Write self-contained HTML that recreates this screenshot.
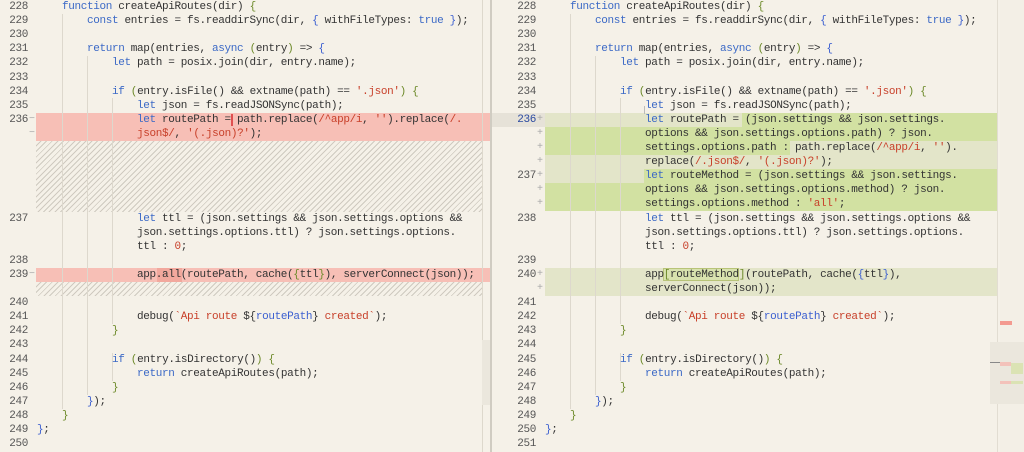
<!DOCTYPE html><html><head><meta charset="utf-8"><style>
body{margin:0;width:1024px;height:452px;background:#f5f1e8;overflow:hidden;position:relative;font-family:"Liberation Mono",monospace;font-size:11px;letter-spacing:-0.35px;color:#333}
.r{position:absolute;height:14.1px;line-height:14.1px;white-space:pre}
.n{position:absolute;width:28px;text-align:right;height:14.1px;line-height:14.1px;color:#555}
.k{color:#3b69c6}.s{color:#c8402a}.b{color:#6d8a2a}.c{color:#3b5fd0}
.bg{position:absolute;height:14.1px}
.red{background:#f7bfb6}.dg{background:#d2e1a2}.lg{background:#e3e5c9}
.hatch{position:absolute;background:repeating-linear-gradient(135deg,#f5f1e8 0 3px,#cfcac0 3px 4px)}
.g{position:absolute;width:1px;background:#ddd8cd}
.p{position:absolute;color:#aaa;height:14.1px;line-height:14.1px;font-size:10px}
</style></head><body>
<div class="bg red" style="left:36px;width:455px;top:112.8px;height:28.2px"></div>
<div class="hatch" style="left:36px;width:446px;top:141px;height:70.5px"></div>
<div class="bg red" style="left:36px;width:455px;top:267.9px"></div>
<div class="bg" style="left:157px;width:25px;top:267.9px;background:#f2a89d"></div>
<div class="hatch" style="left:36px;width:446px;top:282px;height:14.1px"></div>
<div style="position:absolute;left:231px;top:114px;width:2px;height:12px;background:#e05050"></div>
<div style="position:absolute;left:482px;top:0;width:1px;height:452px;background:#ddd8cc"></div>
<div style="position:absolute;left:482px;top:340px;width:8px;height:65px;background:#ebe7dd"></div>
<div style="position:absolute;left:490px;top:0;width:2px;height:452px;background:#d0ccc2"></div>
<div class="bg" style="left:492px;width:53px;top:112.8px;background:#e6e2d8"></div>
<div class="bg lg" style="left:545px;width:453px;top:112.8px;height:56.4px"></div>
<div class="bg dg" style="left:742px;width:256px;top:112.8px"></div>
<div class="bg dg" style="left:545px;width:453px;top:126.9px"></div>
<div class="bg dg" style="left:545px;width:245px;top:141px"></div>
<div class="bg lg" style="left:545px;width:453px;top:169.2px;height:42.3px"></div>
<div class="bg dg" style="left:644px;width:354px;top:169.2px"></div>
<div class="bg dg" style="left:545px;width:453px;top:183.3px;height:28.2px"></div>
<div class="bg lg" style="left:545px;width:453px;top:267.9px;height:28.2px"></div>
<div style="position:absolute;left:663px;top:268.4px;width:76px;height:13px;border:1px solid #b8c478;background:#d8e2ae;box-sizing:border-box"></div>
<div style="position:absolute;left:997px;top:0;width:1px;height:452px;background:#e2ddd2"></div>
<div style="position:absolute;left:1000px;top:0;width:24px;height:452px;background:#f3efe6"></div>
<div style="position:absolute;left:990px;top:342px;width:34px;height:62px;background:#ebe7dd"></div>
<div style="position:absolute;left:1000px;top:321px;width:12px;height:4px;background:#f39a90"></div>
<div style="position:absolute;left:1000px;top:362px;width:11px;height:4px;background:#f3c2ba"></div>
<div style="position:absolute;left:1011px;top:363px;width:12px;height:11px;background:#dbe3b4"></div>
<div style="position:absolute;left:1000px;top:381px;width:11px;height:3px;background:#f3c2ba"></div>
<div style="position:absolute;left:1011px;top:381px;width:12px;height:3px;background:#dbe3b4"></div>
<div style="position:absolute;left:990px;top:362px;width:10px;height:1px;background:#888"></div>
<div class="g" style="left:62px;top:14px;height:395px"></div>
<div class="g" style="left:87px;top:56px;height:339px"></div>
<div class="g" style="left:112px;top:98px;height:226px"></div>
<div class="g" style="left:112px;top:353px;height:28px"></div>
<div class="g" style="left:570px;top:14px;height:395px"></div>
<div class="g" style="left:595px;top:56px;height:339px"></div>
<div class="g" style="left:620px;top:98px;height:226px"></div>
<div class="g" style="left:620px;top:353px;height:28px"></div>
<div class="g" style="left:644px;top:106px;height:8px;background:#bbb"></div>

<div class="n" style="left:0;top:0">228</div><div class="n" style="left:0;top:14.1px">229</div><div class="n" style="left:0;top:28.2px">230</div><div class="n" style="left:0;top:42.3px">231</div><div class="n" style="left:0;top:56.4px">232</div><div class="n" style="left:0;top:70.5px">233</div><div class="n" style="left:0;top:84.6px">234</div><div class="n" style="left:0;top:98.7px">235</div><div class="n" style="left:0;top:112.8px">236</div>
<div class="p" style="left:29px;top:112.8px">−</div><div class="p" style="left:29px;top:126.9px">−</div>
<div class="n" style="left:0;top:211.5px">237</div><div class="n" style="left:0;top:253.8px">238</div><div class="n" style="left:0;top:267.9px">239</div><div class="p" style="left:29px;top:267.9px">−</div>
<div class="n" style="left:0;top:296.1px">240</div><div class="n" style="left:0;top:310.2px">241</div><div class="n" style="left:0;top:324.3px">242</div><div class="n" style="left:0;top:338.4px">243</div><div class="n" style="left:0;top:352.5px">244</div><div class="n" style="left:0;top:366.6px">245</div><div class="n" style="left:0;top:380.7px">246</div><div class="n" style="left:0;top:394.8px">247</div><div class="n" style="left:0;top:408.9px">248</div><div class="n" style="left:0;top:423px">249</div><div class="n" style="left:0;top:437.1px">250</div>

<div class="r" style="left:37px;top:0">    <span class="k">function</span> createApiRoutes(dir) <span class="b">{</span></div>
<div class="r" style="left:37px;top:14.1px">        <span class="k">const</span> entries = fs.readdirSync(dir, <span class="c">{</span> withFileTypes: <span class="k">true</span> <span class="c">}</span>);</div>
<div class="r" style="left:37px;top:42.3px">        <span class="k">return</span> map(entries, <span class="k">async</span> <span class="b">(</span>entry<span class="b">)</span> =&gt; <span class="c">{</span></div>
<div class="r" style="left:37px;top:56.4px">            <span class="k">let</span> path = posix.join(dir, entry.name);</div>
<div class="r" style="left:37px;top:84.6px">            <span class="k">if</span> <span class="b">(</span>entry.isFile() &amp;&amp; extname(path) == <span class="s">'.json'</span><span class="b">)</span> <span class="b">{</span></div>
<div class="r" style="left:37px;top:98.7px">                <span class="k">let</span> json = fs.readJSONSync(path);</div>
<div class="r" style="left:37px;top:112.8px">                <span class="k">let</span> routePath = path.replace(<span class="s">/^app/i</span>, <span class="s">''</span>).replace(<span class="s">/.</span></div>
<div class="r" style="left:37px;top:126.9px">                <span class="s">json$/</span>, <span class="s">'(.json)?'</span>);</div>
<div class="r" style="left:37px;top:211.5px">                <span class="k">let</span> ttl = (json.settings &amp;&amp; json.settings.options &amp;&amp;</div>
<div class="r" style="left:37px;top:225.6px">                json.settings.options.ttl) ? json.settings.options.</div>
<div class="r" style="left:37px;top:239.7px">                ttl : <span class="s">0</span>;</div>
<div class="r" style="left:37px;top:267.9px">                app.all(routePath, cache(<span class="b">{</span>ttl<span class="b">}</span>), serverConnect(json));</div>
<div class="r" style="left:37px;top:310.2px">                debug(<span class="s">`Api route </span>${<span class="c">routePath</span>}<span class="s"> created`</span>);</div>
<div class="r" style="left:37px;top:324.3px">            <span class="b">}</span></div>
<div class="r" style="left:37px;top:352.5px">            <span class="k">if</span> <span class="b">(</span>entry.isDirectory()<span class="b">)</span> <span class="b">{</span></div>
<div class="r" style="left:37px;top:366.6px">                <span class="k">return</span> createApiRoutes(path);</div>
<div class="r" style="left:37px;top:380.7px">            <span class="b">}</span></div>
<div class="r" style="left:37px;top:394.8px">        <span class="c">}</span>);</div>
<div class="r" style="left:37px;top:408.9px">    <span class="b">}</span></div>
<div class="r" style="left:37px;top:423px"><span class="c">}</span>;</div>

<div class="n" style="left:508px;top:0">228</div><div class="n" style="left:508px;top:14.1px">229</div><div class="n" style="left:508px;top:28.2px">230</div><div class="n" style="left:508px;top:42.3px">231</div><div class="n" style="left:508px;top:56.4px">232</div><div class="n" style="left:508px;top:70.5px">233</div><div class="n" style="left:508px;top:84.6px">234</div><div class="n" style="left:508px;top:98.7px">235</div><div class="n" style="left:508px;top:112.8px;color:#2b4aa0">236</div>
<div class="p" style="left:537px;top:112.8px">+</div><div class="p" style="left:537px;top:126.9px">+</div><div class="p" style="left:537px;top:141px">+</div><div class="p" style="left:537px;top:155.1px">+</div>
<div class="n" style="left:508px;top:169.2px">237</div><div class="p" style="left:537px;top:169.2px">+</div><div class="p" style="left:537px;top:183.3px">+</div><div class="p" style="left:537px;top:197.4px">+</div>
<div class="n" style="left:508px;top:211.5px">238</div><div class="n" style="left:508px;top:253.8px">239</div><div class="n" style="left:508px;top:267.9px">240</div><div class="p" style="left:537px;top:267.9px">+</div><div class="p" style="left:537px;top:282px">+</div>
<div class="n" style="left:508px;top:296.1px">241</div><div class="n" style="left:508px;top:310.2px">242</div><div class="n" style="left:508px;top:324.3px">243</div><div class="n" style="left:508px;top:338.4px">244</div><div class="n" style="left:508px;top:352.5px">245</div><div class="n" style="left:508px;top:366.6px">246</div><div class="n" style="left:508px;top:380.7px">247</div><div class="n" style="left:508px;top:394.8px">248</div><div class="n" style="left:508px;top:408.9px">249</div><div class="n" style="left:508px;top:423px">250</div><div class="n" style="left:508px;top:437.1px">251</div>

<div class="r" style="left:545px;top:0">    <span class="k">function</span> createApiRoutes(dir) <span class="b">{</span></div>
<div class="r" style="left:545px;top:14.1px">        <span class="k">const</span> entries = fs.readdirSync(dir, <span class="c">{</span> withFileTypes: <span class="k">true</span> <span class="c">}</span>);</div>
<div class="r" style="left:545px;top:42.3px">        <span class="k">return</span> map(entries, <span class="k">async</span> <span class="b">(</span>entry<span class="b">)</span> =&gt; <span class="c">{</span></div>
<div class="r" style="left:545px;top:56.4px">            <span class="k">let</span> path = posix.join(dir, entry.name);</div>
<div class="r" style="left:545px;top:84.6px">            <span class="k">if</span> <span class="b">(</span>entry.isFile() &amp;&amp; extname(path) == <span class="s">'.json'</span><span class="b">)</span> <span class="b">{</span></div>
<div class="r" style="left:545px;top:98.7px">                <span class="k">let</span> json = fs.readJSONSync(path);</div>
<div class="r" style="left:545px;top:112.8px">                <span class="k">let</span> routePath = (json.settings &amp;&amp; json.settings.</div>
<div class="r" style="left:545px;top:126.9px">                options &amp;&amp; json.settings.options.path) ? json.</div>
<div class="r" style="left:545px;top:141px">                settings.options.path : path.replace(<span class="s">/^app/i</span>, <span class="s">''</span>).</div>
<div class="r" style="left:545px;top:155.1px">                replace(<span class="s">/.json$/</span>, <span class="s">'(.json)?'</span>);</div>
<div class="r" style="left:545px;top:169.2px">                <span class="k">let</span> routeMethod = (json.settings &amp;&amp; json.settings.</div>
<div class="r" style="left:545px;top:183.3px">                options &amp;&amp; json.settings.options.method) ? json.</div>
<div class="r" style="left:545px;top:197.4px">                settings.options.method : <span class="s">'all'</span>;</div>
<div class="r" style="left:545px;top:211.5px">                <span class="k">let</span> ttl = (json.settings &amp;&amp; json.settings.options &amp;&amp;</div>
<div class="r" style="left:545px;top:225.6px">                json.settings.options.ttl) ? json.settings.options.</div>
<div class="r" style="left:545px;top:239.7px">                ttl : <span class="s">0</span>;</div>
<div class="r" style="left:545px;top:267.9px">                app<span class="b">[</span>routeMethod<span class="b">]</span>(routePath, cache(<span class="c">{</span>ttl<span class="c">}</span>),</div>
<div class="r" style="left:545px;top:282px">                serverConnect(json));</div>
<div class="r" style="left:545px;top:310.2px">                debug(<span class="s">`Api route </span>${<span class="c">routePath</span>}<span class="s"> created`</span>);</div>
<div class="r" style="left:545px;top:324.3px">            <span class="b">}</span></div>
<div class="r" style="left:545px;top:352.5px">            <span class="k">if</span> <span class="b">(</span>entry.isDirectory()<span class="b">)</span> <span class="b">{</span></div>
<div class="r" style="left:545px;top:366.6px">                <span class="k">return</span> createApiRoutes(path);</div>
<div class="r" style="left:545px;top:380.7px">            <span class="b">}</span></div>
<div class="r" style="left:545px;top:394.8px">        <span class="c">}</span>);</div>
<div class="r" style="left:545px;top:408.9px">    <span class="b">}</span></div>
<div class="r" style="left:545px;top:423px"><span class="c">}</span>;</div>
</body></html>
